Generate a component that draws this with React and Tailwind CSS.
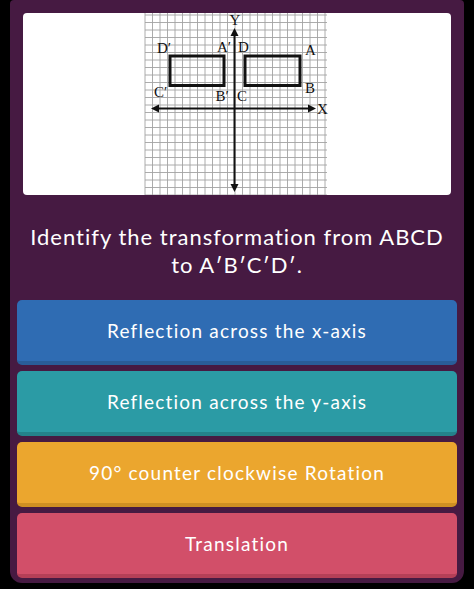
const GRID_X0 = 145;
const GRID_X1 = 327;
const STEP = 7.5;

function Graph() {
  const vLines = [];
  for (let x = GRID_X0; x <= GRID_X1; x += STEP) vLines.push(x);
  const hLines = [];
  for (let y = 0; y <= 182; y += STEP) hLines.push(y + 2);

  // coords here are page coords, shifted onto the white panel (left 23, top 13)
  return (
    <svg viewBox="0 0 428 182" className="block h-full w-full" style={{ fontFamily: '"Liberation Serif", "DejaVu Serif", serif' }}>
      <g transform="translate(-23 -13)">
        {vLines.map((x) => (
          <line key={"v" + x} x1={x} y1={13} x2={x} y2={195} stroke="#a3a3a3" strokeWidth="0.9" />
        ))}
        {hLines.map((y) => (
          <line key={"h" + y} x1={GRID_X0} y1={y + 13} x2={GRID_X1} y2={y + 13} stroke="#a3a3a3" strokeWidth="0.9" />
        ))}

        {/* axes */}
        <line x1="234.5" y1="33" x2="234.5" y2="187" stroke="#111" strokeWidth="2" />
        <polygon points="234.5,28 230.5,36 238.5,36" fill="#111" />
        <polygon points="234.5,192 230.5,184 238.5,184" fill="#111" />
        <line x1="157" y1="108.5" x2="310" y2="108.5" stroke="#111" strokeWidth="2" />
        <polygon points="151,108.5 159,104.5 159,112.5" fill="#111" />
        <polygon points="316,108.5 308,104.5 308,112.5" fill="#111" />

        {/* rectangles */}
        <rect x="170" y="56" width="54" height="29.5" fill="none" stroke="#111" strokeWidth="3" />
        <rect x="245" y="56" width="55" height="29.5" fill="none" stroke="#111" strokeWidth="3" />

        {/* labels */}
        <g fontSize="15" fill="#111">
          <text x="229.5" y="25">Y</text>
          <text x="157" y="53">D′</text>
          <text x="217" y="52">A′</text>
          <text x="238" y="52">D</text>
          <text x="305" y="55">A</text>
          <text x="154" y="97">C′</text>
          <text x="215.5" y="101">B′</text>
          <text x="237" y="101">C</text>
          <text x="305" y="93">B</text>
          <text x="317" y="113.5">X</text>
        </g>
      </g>
    </svg>
  );
}

const options = [
  { label: "Reflection across the x-axis", cls: "bg-[#2f6cb3] border-[#295d98]" },
  { label: "Reflection across the y-axis", cls: "bg-[#2b9ba5] border-[#24818a]" },
  { label: "90° counter clockwise Rotation", cls: "bg-[#eba62e] border-[#cf8f22]" },
  { label: "Translation", cls: "bg-[#d24f69] border-[#b53f57]" },
];

export default function App() {
  return (
    <div className="h-[589px] bg-black px-[10px]" style={{ fontFamily: 'Lato, "Noto Sans", sans-serif' }}>
      <div className="rounded-b-xl rounded-t-sm bg-[#461a42] px-[13px] pb-[5px] pt-[13px]">
        <div className="h-[182px] overflow-hidden rounded-[4px] bg-white">
          <Graph />
        </div>

        <p className="mb-[21px] mt-[28px] text-center text-[22px] leading-[28px] tracking-[1px] text-white">
          Identify the transformation from ABCD
          <br />
          to A′B′C′D′.
        </p>

        <div className="-mx-[6px] flex flex-col gap-[6px]">
          {options.map((o) => (
            <button
              key={o.label}
              className={"flex h-[65px] items-center justify-center rounded-[5px] border-b-4 pt-[2px] text-[19px] tracking-[1.2px] text-white " + o.cls}
            >
              {o.label}
            </button>
          ))}
        </div>
      </div>
    </div>
  );
}
